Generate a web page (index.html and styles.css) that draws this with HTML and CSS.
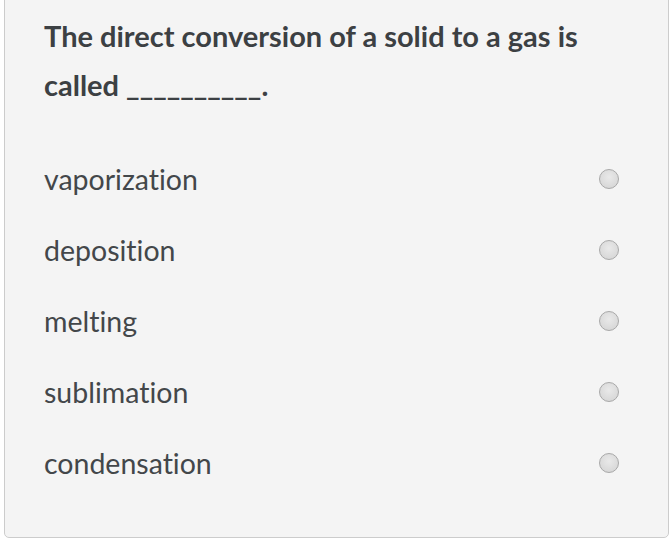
FILE: index.html
```html
<!DOCTYPE html>
<html>
<head>
<meta charset="utf-8">
<link rel="stylesheet" href="styles.css">
</head>
<body>
<div class="card">
  <div class="question">The direct conversion of a solid to a gas is called __________.</div>
  <ul class="options">
    <li class="option"><span class="label">vaporization</span><span class="radio"></span></li>
    <li class="option"><span class="label">deposition</span><span class="radio"></span></li>
    <li class="option"><span class="label">melting</span><span class="radio"></span></li>
    <li class="option"><span class="label">sublimation</span><span class="radio"></span></li>
    <li class="option"><span class="label">condensation</span><span class="radio"></span></li>
  </ul>
</div>
</body>
</html>
```
FILE: styles.css
```css
html, body {
  margin: 0;
  padding: 0;
  background: #ffffff;
}
body {
  font-family: "Lato", "Liberation Sans", sans-serif;
  color: #43474a;
  font-variant-ligatures: none;
  font-feature-settings: "liga" 0, "clig" 0;
}
.card {
  margin: -10px 0 0 4px;
  width: 665px;
  box-sizing: border-box;
  background: #f4f4f4;
  border: 1px solid #cccccc;
  border-radius: 5px;
  padding: 20px 49px 38px 39px;
  height: 548px;
}
.question {
  font-weight: bold;
  font-size: 29px;
  line-height: 49px;
  color: #3c4043;
  width: 560px;
}
.options {
  list-style: none;
  margin: 34px 0 0 0;
  padding: 0;
}
.option {
  display: flex;
  align-items: center;
  justify-content: space-between;
  height: 71px;
  font-size: 28.5px;
}
.radio {
  width: 20px;
  height: 20px;
  box-sizing: border-box;
  border-radius: 50%;
  border: 1px solid #a8a8a8;
  background: radial-gradient(circle at 50% 40%, #e9e9e9, #d2d2d2);
}
```
